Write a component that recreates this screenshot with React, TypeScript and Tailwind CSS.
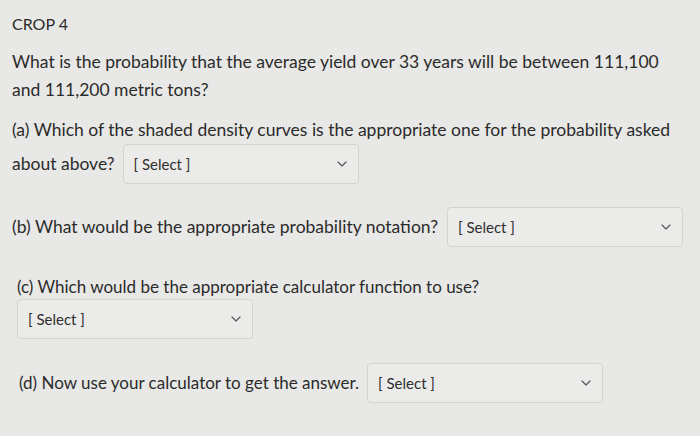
import { ChevronDown } from "lucide-react";

function SelectBox({ className = "" }: { className?: string }) {
  return (
    <span
      className={`inline-flex h-[40px] w-[236px] items-center justify-between rounded-[4px] border border-[#d3d3d1] bg-[#ebebe9] pl-[10px] pr-[8px] align-middle ${className}`}
    >
      <span className="text-[15px] text-[#2f2f2f]">[ Select ]</span>
      <ChevronDown className="h-[16px] w-[16px] text-[#555]" strokeWidth={1.75} />
    </span>
  );
}

export default function App() {
  return (
    <div
      className="h-[436px] w-[700px] overflow-hidden bg-[#e8e8e6] pl-[12px] pt-[12px] text-[#2b2b2b]"
      style={{ fontFamily: "Lato, 'Open Sans', sans-serif" }}
    >
      <p className="text-[16px] leading-[24px]">CROP 4</p>

      <p className="mt-[12px] w-[660px] text-[17.5px] leading-[28px]">
        What is the probability that the average yield over 33 years will be between 111,100 and 111,200 metric tons?
      </p>

      <p className="mt-[12px] text-[17.5px] leading-[28px]">
        (a) Which of the shaded density curves is the appropriate one for the probability asked
      </p>
      <div className="flex items-center">
        <span className="text-[17.5px]">about above?</span>
        <SelectBox className="ml-[8px]" />
      </div>

      <div className="mt-[23px] flex items-center">
        <span className="text-[17.5px]">(b) What would be the appropriate probability notation?</span>
        <SelectBox className="ml-[9px]" />
      </div>

      <p className="mt-[26px] pl-[5px] text-[17px] leading-[28px]">
        (c) Which would be the appropriate calculator function to use?
      </p>
      <SelectBox className="ml-[5px] mt-[-2px]" />

      <div className="mt-[24px] flex items-center pl-[7px]">
        <span className="text-[17px]">(d) Now use your calculator to get the answer.</span>
        <SelectBox className="ml-[8px]" />
      </div>
    </div>
  );
}
